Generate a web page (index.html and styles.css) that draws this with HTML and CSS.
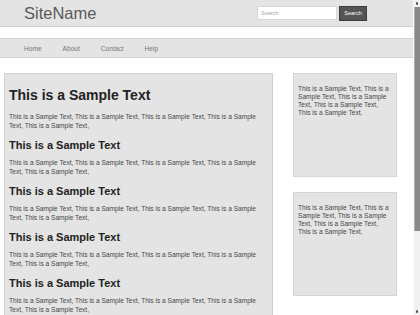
FILE: index.html
```html
<!DOCTYPE html>
<html lang="en">
<head>
  <meta charset="UTF-8">
  <title>SiteName</title>
  <link rel="stylesheet" href="styles.css">
</head>
<body>
  <!-- Header: site name and search -->
  <header class="top">
    <div class="brand">SiteName</div>
    <form class="search">
      <input type="text" placeholder="Search">
      <button type="button">Search</button>
    </form>
  </header>

  <!-- Main menu -->
  <nav class="menu">
    <a href="#">Home</a>
    <a href="#">About</a>
    <a href="#">Contact</a>
    <a href="#">Help</a>
  </nav>

  <div class="page">
    <main class="content">
      <h1>This is a Sample Text</h1>
      <p>This is a Sample Text, This is a Sample Text, This is a Sample Text, This is a Sample Text, This is a Sample Text,</p>
      <h2>This is a Sample Text</h2>
      <p>This is a Sample Text, This is a Sample Text, This is a Sample Text, This is a Sample Text, This is a Sample Text,</p>
      <h2>This is a Sample Text</h2>
      <p>This is a Sample Text, This is a Sample Text, This is a Sample Text, This is a Sample Text, This is a Sample Text,</p>
      <h2>This is a Sample Text</h2>
      <p>This is a Sample Text, This is a Sample Text, This is a Sample Text, This is a Sample Text, This is a Sample Text,</p>
      <h2>This is a Sample Text</h2>
      <p>This is a Sample Text, This is a Sample Text, This is a Sample Text, This is a Sample Text, This is a Sample Text,</p>
    </main>

    <aside class="sidebar">
      <div class="widget">
        <p>This is a Sample Text, This is a Sample Text, This is a Sample Text, This is a Sample Text, This is a Sample Text,</p>
      </div>
      <div class="widget">
        <p>This is a Sample Text, This is a Sample Text, This is a Sample Text, This is a Sample Text, This is a Sample Text,</p>
      </div>
    </aside>
  </div>

  <!-- window scrollbar as it appears in the capture -->
  <div class="scrollbar">
    <span class="arrow"></span>
    <div class="track"><div class="thumb"></div></div>
    <span class="arrow"></span>
  </div>
</body>
</html>
```

FILE: styles.css
```css
html {
  overflow: hidden;
}
body {
  margin: 0 7px 0 0;
  font-family: "Liberation Sans", Arial, sans-serif;
  background-color: #fff;
}
.top {
  display: flex;
  align-items: center;
  justify-content: space-between;
  height: 26px;
  padding: 0 46px 0 24px;
  background-color: #e4e4e4;
  border-bottom: 1px solid #cfcfcf;
}
.brand {
  font-size: 16.5px;
  color: #5a5a5a;
}
.search {
  display: flex;
  gap: 2px;
  margin: 0;
}
.search input {
  width: 80px;
  height: 14px;
  box-sizing: border-box;
  padding: 0 3px;
  border: 1px solid #d8d8d8;
  font-family: inherit;
  font-size: 5.5px;
  background-color: #fff;
}
.search input::placeholder {
  color: #aaa;
}
.search button {
  width: 28px;
  height: 15px;
  padding: 0;
  border: 1px solid #3c3c3c;
  background-color: #555;
  color: #fff;
  font-family: inherit;
  font-size: 5.5px;
}
.menu {
  display: flex;
  gap: 21px;
  align-items: center;
  height: 18px;
  margin-top: 11px;
  padding: 0 24px;
  background-color: #e4e4e4;
  border-top: 1px solid #d2d2d2;
  border-bottom: 1px solid #d2d2d2;
}
.menu a {
  font-size: 6.6px;
  color: #777;
  text-decoration: none;
}
.page {
  display: flex;
  align-items: flex-start;
  gap: 20px;
  margin-top: 15px;
  padding-left: 4px;
}
.content {
  width: 269px;
  box-sizing: border-box;
  padding: 13px 4px 14px;
  background-color: #e4e4e4;
  border: 1px solid #d0d0d0;
}
.content h1 {
  margin: 0 0 8px;
  font-size: 14px;
  line-height: 17px;
  color: #222;
}
.content h2 {
  margin: 9px 0 6px;
  font-size: 11px;
  line-height: 13px;
  color: #222;
}
.content p {
  margin: 0;
  font-size: 6.6px;
  line-height: 9px;
  color: #484848;
}
.sidebar {
  display: flex;
  flex-direction: column;
  gap: 15px;
}
.widget {
  width: 104px;
  height: 104px;
  box-sizing: border-box;
  padding: 11px 4px;
  background-color: #e4e4e4;
  border: 1px solid #d6d6d6;
}
.widget p {
  margin: 0;
  font-size: 6.6px;
  line-height: 8px;
  color: #484848;
}
.scrollbar {
  position: fixed;
  top: 0;
  right: 0;
  bottom: 0;
  width: 7px;
  display: flex;
  flex-direction: column;
  background-color: #f1f1f1;
  border-left: 1px solid #fafafa;
  box-sizing: border-box;
}
.arrow {
  height: 7px;
  background: radial-gradient(circle, #555 0 1px, transparent 1.5px);
}
.track {
  flex: 1;
}
.thumb {
  height: 224px;
  background-color: #8a8a8a;
  border-left: 1px solid #b0b0b0;
}
```
